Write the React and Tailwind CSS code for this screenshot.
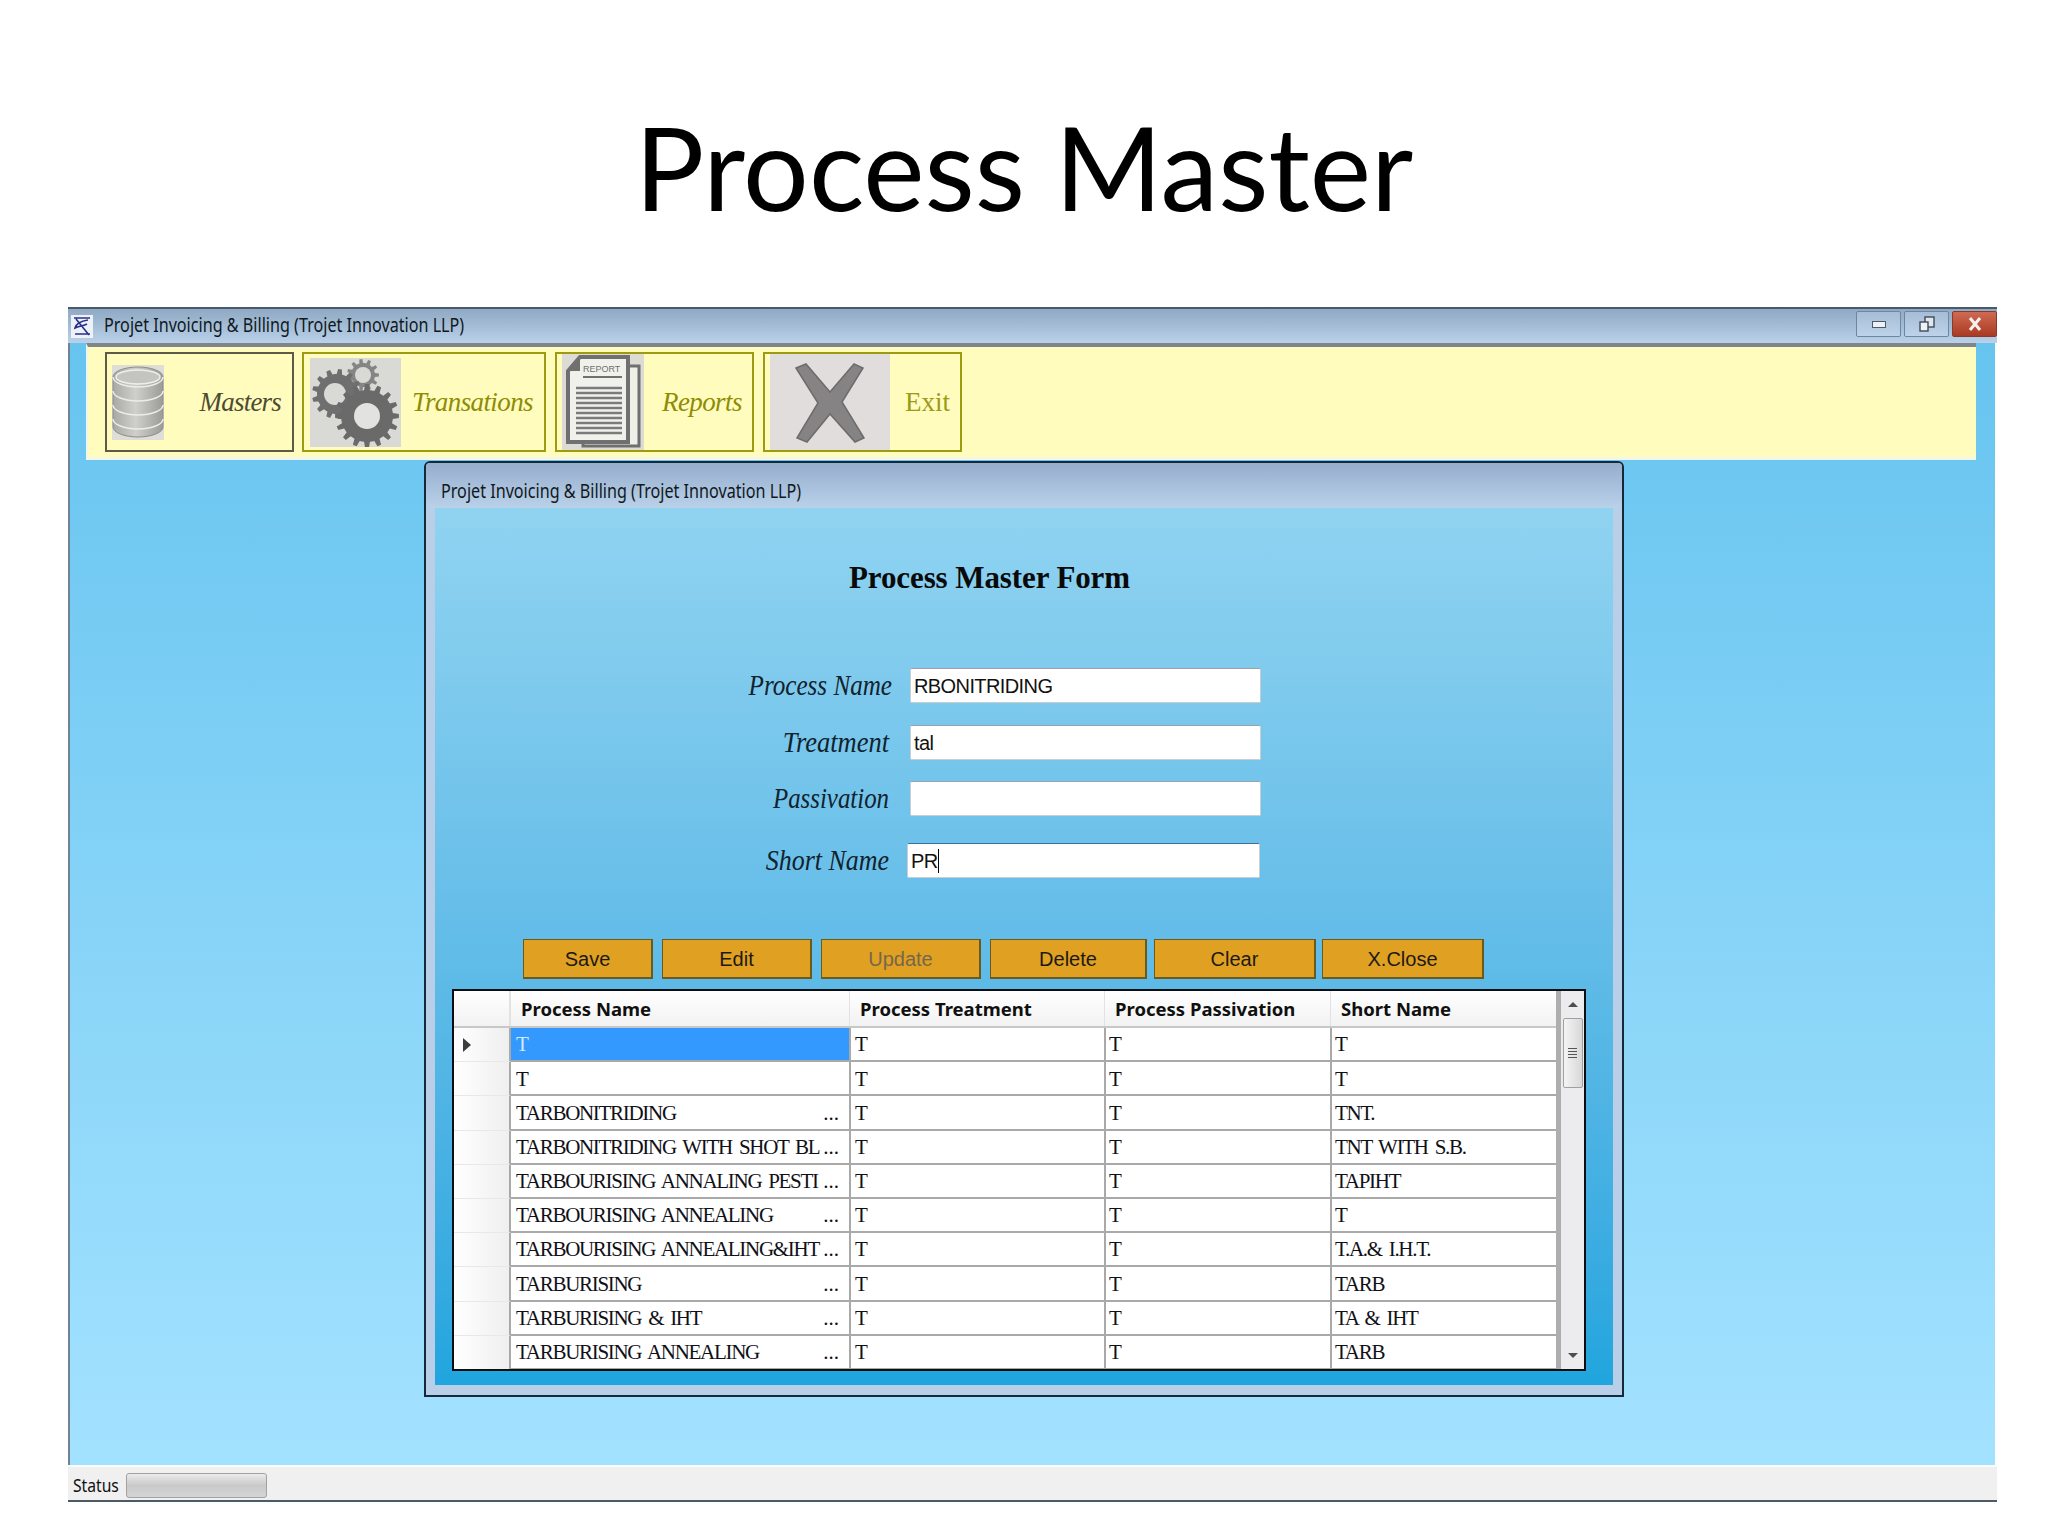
import React from "react";

const rows = [
  ["T", false, "T", "T", "T"],
  ["T", false, "T", "T", "T"],
  ["TARBONITRIDING", true, "T", "T", "TNT."],
  ["TARBONITRIDING WITH SHOT BL", true, "T", "T", "TNT WITH S.B."],
  ["TARBOURISING ANNALING PESTI", true, "T", "T", "TAPIHT"],
  ["TARBOURISING ANNEALING", true, "T", "T", "T"],
  ["TARBOURISING ANNEALING&IHT", true, "T", "T", "T.A.& I.H.T."],
  ["TARBURISING", true, "T", "T", "TARB"],
  ["TARBURISING & IHT", true, "T", "T", "TA & IHT"],
  ["TARBURISING ANNEALING", true, "T", "T", "TARB"],
];

const buttons = [
  { label: "Save", cls: "w-[130px]" },
  { label: "Edit", cls: "w-[150px] ml-[9px]" },
  { label: "Update", cls: "w-[160px] ml-[9px] text-[#77674a]" },
  { label: "Delete", cls: "w-[157px] ml-[9px]" },
  { label: "Clear", cls: "w-[162px] ml-[7px]" },
  { label: "X.Close", cls: "w-[162px] ml-[6px]" },
];

// teeth around a circle, for the gears icon
function gearPath(cx, cy, r, teeth, depth) {
  let d = "";
  const step = (Math.PI * 2) / teeth;
  for (let i = 0; i < teeth; i++) {
    const a = i * step;
    const pts = [
      [r - depth, a - step * 0.5],
      [r - depth, a - step * 0.28],
      [r, a - step * 0.16],
      [r, a + step * 0.16],
      [r - depth, a + step * 0.28],
    ];
    pts.forEach(([rad, t], j) => {
      const x = (cx + Math.cos(t) * rad).toFixed(1);
      const y = (cy + Math.sin(t) * rad).toFixed(1);
      d += (i === 0 && j === 0 ? "M" : "L") + x + " " + y + " ";
    });
  }
  return d + "Z";
}

function DbIcon() {
  const bands = [60, 46, 32, 18];
  return (
    <svg width="52" height="75" viewBox="0 0 52 75" className="shrink-0">
      <defs>
        <linearGradient id="db" x1="0" x2="1" y1="0" y2="0">
          <stop offset="0" stopColor="#a8a8a4" />
          <stop offset="0.45" stopColor="#cfcfcb" />
          <stop offset="1" stopColor="#9b9b98" />
        </linearGradient>
      </defs>
      <rect width="52" height="75" fill="#deded6" />
      <path d="M1 12 A25 10 0 0 1 51 12 V62 A25 10 0 0 1 1 62 Z" fill="url(#db)" stroke="#8d8d8a" />
      <ellipse cx="26" cy="12" rx="22" ry="7" fill="#c4c4c0" stroke="#efefea" strokeWidth="1.5" />
      {bands.map((y) => (
        <path key={y} d={`M1 ${y - 6} A25 10 0 0 0 51 ${y - 6}`} fill="none" stroke="#ecece8" strokeWidth="1.5" />
      ))}
    </svg>
  );
}

function GearsIcon() {
  return (
    <svg width="91" height="89" viewBox="0 0 91 89" className="shrink-0">
      <rect width="91" height="89" fill="#d9d9d6" />
      <path d={gearPath(53, 17, 16, 11, 4)} fill="#858585" />
      <circle cx="53" cy="17" r="8" fill="#d9d9d6" />
      <path d={gearPath(27, 36, 25, 13, 5)} fill="#6f6f6f" />
      <circle cx="25" cy="36" r="11" fill="#d9d9d6" />
      <path d={gearPath(57, 58, 32, 16, 6)} fill="#6a6a6a" />
      <circle cx="57" cy="58" r="13" fill="#e2e2e0" />
    </svg>
  );
}

function ReportIcon() {
  const lines = [];
  for (let y = 34; y < 82; y += 5) lines.push(y);
  return (
    <svg width="82" height="96" viewBox="0 0 82 96" className="shrink-0">
      <rect width="82" height="96" fill="#dcdcd4" />
      <path d="M14 8 H70 V88 H14 Z" fill="#efefe9" stroke="#6f6f6f" strokeWidth="3" transform="translate(7 4)" />
      <path d="M18 3 H66 V88 H6 V17 Z" fill="#f1f1ec" stroke="#707070" strokeWidth="4" />
      <path d="M18 3 V17 H6 Z" fill="#707070" />
      <text x="21" y="18" fontSize="9" fill="#707070" fontFamily="Liberation Sans, sans-serif">REPORT</text>
      <line x1="21" x2="60" y1="23" y2="23" stroke="#707070" strokeWidth="2" />
      {lines.map((y) => (
        <line key={y} x1="14" x2="60" y1={y} y2={y} stroke="#7b7b7b" strokeWidth="2.5" />
      ))}
    </svg>
  );
}

function ExitIcon() {
  return (
    <svg width="120" height="96" viewBox="0 0 120 96" className="shrink-0">
      <rect width="120" height="96" fill="#e1dddd" />
      <path d="M26 14 L36 10 L60 38 L84 10 L93 14 L72 48 L94 84 L85 88 L60 60 L37 88 L27 84 L48 49 Z" fill="#858383" stroke="#6d6b6b" strokeWidth="1.5" />
    </svg>
  );
}

function WinButton({ cls, children }) {
  return (
    <div className={"h-[26px] w-[45px] rounded-[2px] border border-[#6f86a3] flex items-center justify-center " + cls}>
      {children}
    </div>
  );
}

export default function App() {
  return (
    <div className="w-[2048px] h-[1536px] bg-white overflow-hidden flex flex-col">
      <div className="h-[307px] flex items-start justify-center pt-[120px] shrink-0">
        <h1 className="font-['Lato',sans-serif] text-[116px] leading-[90px] text-black whitespace-nowrap pt-[2px]">Process Master</h1>
      </div>

      {/* main window */}
      <div className="ml-[68px] w-[1929px] h-[1195px] flex flex-col shrink-0">
        <div className="h-[36px] border-t-2 border-[#4b5a68] bg-gradient-to-b from-[#90a9c4] to-[#b9d1e9] flex items-center shrink-0">
          <svg width="22" height="23" viewBox="0 0 22 23" className="ml-[3px] shrink-0">
            <rect width="22" height="23" fill="#eef1f8" />
            <path d="M3 3 H19 M5 4 L18 20 M17 5 C10 6 5 9 4 13 C8 11 13 11 16 9 M4 19 H19" fill="none" stroke="#27308f" strokeWidth="1.6" />
          </svg>
          <div className="ml-[11px] mb-[2px] w-[400px] font-['Noto_Sans',sans-serif] text-[19px] text-[#101820] whitespace-nowrap origin-left scale-x-[0.85]">
            Projet Invoicing &amp; Billing (Trojet Innovation LLP)
          </div>
          <div className="ml-auto flex gap-[3px] self-start mt-[2px]">
            <WinButton cls="bg-gradient-to-b from-[#a7bdd7] to-[#bdd3ea]">
              <div className="w-[14px] h-[7px] bg-[#eef2f6] border border-[#4f5a66]" />
            </WinButton>
            <WinButton cls="bg-gradient-to-b from-[#a7bdd7] to-[#bdd3ea]">
              <svg width="18" height="18" viewBox="0 0 18 18">
                <rect x="7" y="2" width="9" height="10" fill="#dfe7ef" stroke="#3f4a55" strokeWidth="1.4" />
                <rect x="2" y="7" width="8" height="9" fill="#eef2f6" stroke="#3f4a55" strokeWidth="1.4" />
              </svg>
            </WinButton>
            <WinButton cls="bg-gradient-to-b from-[#cf6a52] to-[#a93a22] border-[#8a3a2a]">
              <svg width="16" height="16" viewBox="0 0 16 16">
                <path d="M3 2 L13 14 M13 2 L3 14" stroke="#f4f1ee" strokeWidth="3" />
              </svg>
            </WinButton>
          </div>
        </div>

        {/* client area */}
        <div className="h-[1122px] w-[1927px] border-l-2 border-[#6f8296] bg-gradient-to-b from-[#66c4ef] to-[#a3e2ff] flex flex-col shrink-0">
          <div className="ml-[16px] w-[1890px] h-[117px] bg-[#fffcbd] border-t-4 border-b-[3px] border-l-2 border-t-[#80858a] border-b-[#f4f6e8] border-l-[#eef6ee] flex items-start pt-[5px] pl-[17px] shrink-0">
            <div className="w-[189px] h-[100px] border-2 border-[#5c5b48] flex items-center justify-between pl-[5px] pr-[11px]">
              <DbIcon />
              <span className="font-['Liberation_Serif',serif] italic text-[27px] text-[#4d4c33] tracking-[-0.8px]">Masters</span>
            </div>
            <div className="ml-[8px] w-[244px] h-[100px] border-2 border-[#9d9b12] flex items-center pl-[6px]">
              <GearsIcon />
              <span className="ml-[11px] font-['Liberation_Serif',serif] italic text-[27px] text-[#8e8c05] tracking-[-0.6px] whitespace-nowrap">Transations</span>
            </div>
            <div className="ml-[9px] w-[199px] h-[100px] border-2 border-[#9d9b12] flex items-center pl-[5px]">
              <ReportIcon />
              <span className="ml-[18px] font-['Liberation_Serif',serif] italic text-[27px] text-[#8e8c05] tracking-[-0.6px]">Reports</span>
            </div>
            <div className="ml-[9px] w-[199px] h-[100px] border-2 border-[#9d9b12] flex items-center pl-[5px]">
              <ExitIcon />
              <span className="ml-[15px] font-['Liberation_Serif',serif] text-[27px] text-[#9c9a1a]">Exit</span>
            </div>
          </div>

          {/* form window */}
          <div className="ml-[354px] mt-[1px] w-[1200px] h-[936px] border-2 border-[#16293a] rounded-t-[6px] bg-[#b9cfe8] flex flex-col shrink-0 overflow-hidden">
            <div className="h-[45px] bg-gradient-to-b from-[#96aecd] to-[#b9d1e9] flex items-center pl-[15px] pt-[12px] shrink-0">
              <div className="w-[400px] font-['Noto_Sans',sans-serif] text-[19px] text-[#101820] whitespace-nowrap origin-left scale-x-[0.85]">
                Projet Invoicing &amp; Billing (Trojet Innovation LLP)
              </div>
            </div>
            <div className="mx-[9px] w-[1178px] h-[877px] bg-gradient-to-b from-[#90d3f1] to-[#20a5de] flex flex-col shrink-0">
              <div className="pl-[414px] pt-[52px] h-[88px] font-['Liberation_Serif',serif] font-bold text-[31px] leading-[36px] text-[#0a0a0a] whitespace-nowrap tracking-[-0.1px] shrink-0">
                Process Master Form
              </div>

              <div className="mt-[72px] flex items-center h-[35px] shrink-0">
                <div className="w-[457px] text-right font-['Liberation_Serif',serif] italic text-[29px] text-[#12222e] origin-right scale-x-[0.866] whitespace-nowrap">Process Name</div>
                <div className="ml-[18px] w-[351px] h-[35px] bg-white border border-[#c9ced3] border-t-[#9aa2aa] rounded-[2px] pl-[3px] flex items-center font-['Liberation_Sans',sans-serif] text-[20px] tracking-[-0.6px] text-[#111]">RBONITRIDING</div>
              </div>
              <div className="mt-[22px] flex items-center h-[35px] shrink-0">
                <div className="w-[454px] text-right font-['Liberation_Serif',serif] italic text-[29px] text-[#12222e] origin-right scale-x-[0.912] whitespace-nowrap">Treatment</div>
                <div className="ml-[21px] w-[351px] h-[35px] bg-white border border-[#c9ced3] border-t-[#9aa2aa] rounded-[2px] pl-[3px] flex items-center font-['Liberation_Sans',sans-serif] text-[20px] tracking-[-0.6px] text-[#111]">tal</div>
              </div>
              <div className="mt-[21px] flex items-center h-[35px] shrink-0">
                <div className="w-[454px] text-right font-['Liberation_Serif',serif] italic text-[29px] text-[#12222e] origin-right scale-x-[0.857] whitespace-nowrap">Passivation</div>
                <div className="ml-[21px] w-[351px] h-[35px] bg-white border border-[#c9ced3] border-t-[#9aa2aa] rounded-[2px]" />
              </div>
              <div className="mt-[27px] flex items-center h-[35px] shrink-0">
                <div className="w-[454px] text-right font-['Liberation_Serif',serif] italic text-[29px] text-[#12222e] origin-right scale-x-[0.895] whitespace-nowrap">Short Name</div>
                <div className="ml-[18px] w-[353px] h-[35px] bg-white border border-[#c9ced3] border-t-[#3f6f9f] rounded-[2px] pl-[3px] flex items-center font-['Liberation_Sans',sans-serif] text-[20px] tracking-[-0.6px] text-[#111]">
                  PR<span className="w-px h-[24px] bg-black" />
                </div>
              </div>

              <div className="mt-[61px] pl-[88px] flex shrink-0">
                {buttons.map((b) => (
                  <div key={b.label} className={"h-[40px] bg-[#e0a022] border-2 border-t border-l border-[#6b5a1e] flex items-center justify-center font-['Liberation_Sans',sans-serif] text-[20px] text-[#1c1a12] " + b.cls}>
                    {b.label}
                  </div>
                ))}
              </div>

              {/* grid */}
              <div className="ml-[17px] mt-[10px] w-[1134px] h-[382px] border-2 border-[#0b0f14] bg-white flex overflow-hidden shrink-0">
                <div className="flex flex-col w-[1102px] shrink-0">
                  <div className="flex h-[37px] border-b-2 border-[#c8c8c8] bg-gradient-to-b from-white to-[#f2f2f2] font-['Noto_Sans',sans-serif] font-bold text-[18.5px] text-[#101010] shrink-0">
                    <div className="w-[57px] border-r-2 border-[#e2e2e2]" />
                    <div className="w-[338px] pl-[10px] flex items-center whitespace-nowrap">Process Name</div>
                    <div className="w-[255px] pl-[10px] flex items-center border-l border-[#e2e2e2] whitespace-nowrap">Process Treatment</div>
                    <div className="w-[226px] pl-[10px] flex items-center border-l border-[#e2e2e2] whitespace-nowrap">Process Passivation</div>
                    <div className="w-[226px] pl-[10px] flex items-center border-l border-[#e2e2e2] whitespace-nowrap">Short Name</div>
                  </div>
                  {rows.map((r, i) => (
                    <div key={i} className="flex h-[34.2px] shrink-0 font-['Liberation_Serif',serif] text-[21px] tracking-[-1.3px] [word-spacing:3px] text-[#101018]">
                      <div className="w-[57px] bg-gradient-to-r from-white to-[#efefef] border-b border-[#e8e8e8] border-r-2 border-r-[#a9a9a9] flex items-center pl-[9px]">
                        {i === 0 && <div className="border-y-[7px] border-y-transparent border-l-[8px] border-l-[#3c3c3c]" />}
                      </div>
                      <div className={"w-[338px] border-b-2 border-[#a9a9a9] pl-[5px] pr-[10px] pt-[2px] flex items-center justify-between whitespace-nowrap " + (i === 0 ? "bg-[#3399ff] text-[#d4e9ff]" : "")}>
                        <span>{r[0]}</span>
                        {r[1] && <span className="tracking-normal">...</span>}
                      </div>
                      <div className="w-[255px] border-b-2 border-l-2 border-[#a9a9a9] pl-[4px] pt-[2px] flex items-center">{r[2]}</div>
                      <div className="w-[226px] border-b-2 border-l-2 border-[#a9a9a9] pl-[3px] pt-[2px] flex items-center">{r[3]}</div>
                      <div className="w-[226px] border-b-2 border-l-2 border-[#a9a9a9] pl-[3px] pt-[2px] flex items-center whitespace-nowrap">{r[4]}</div>
                    </div>
                  ))}
                </div>
                {/* scrollbar */}
                <div className="w-[28px] border-l-[5px] border-[#aeaeae] bg-[#ececef] flex flex-col items-center shrink-0">
                  <div className="mt-[11px] border-x-[5px] border-x-transparent border-b-[5px] border-b-[#4d4d4d]" />
                  <div className="mt-[11px] w-[20px] h-[70px] rounded-[2px] border border-[#a0a0a0] bg-gradient-to-r from-[#f4f4f4] to-[#d8d8d8] flex flex-col items-center justify-center gap-[2px]">
                    <div className="w-[9px] h-px bg-[#555]" />
                    <div className="w-[9px] h-px bg-[#555]" />
                    <div className="w-[9px] h-px bg-[#555]" />
                    <div className="w-[9px] h-px bg-[#555]" />
                  </div>
                  <div className="mt-auto mb-[11px] border-x-[5px] border-x-transparent border-t-[5px] border-t-[#4d4d4d]" />
                </div>
              </div>
            </div>
          </div>
        </div>

        {/* status bar */}
        <div className="h-[37px] bg-[#f0f0f0] border-t-2 border-t-[#fbfbfb] border-b-2 border-b-[#4a5a68] flex items-center shrink-0">
          <div className="ml-[5px] mt-[3px] w-[53px] font-['Noto_Sans',sans-serif] text-[18px] text-[#101010] origin-left scale-x-[0.87] whitespace-nowrap">Status</div>
          <div className="mt-[3px] w-[141px] h-[25px] rounded-[3px] border border-[#a2a2a2] bg-gradient-to-b from-[#ebebeb] via-[#c9c9c9] to-[#d5d5d5]" />
        </div>
      </div>
    </div>
  );
}
